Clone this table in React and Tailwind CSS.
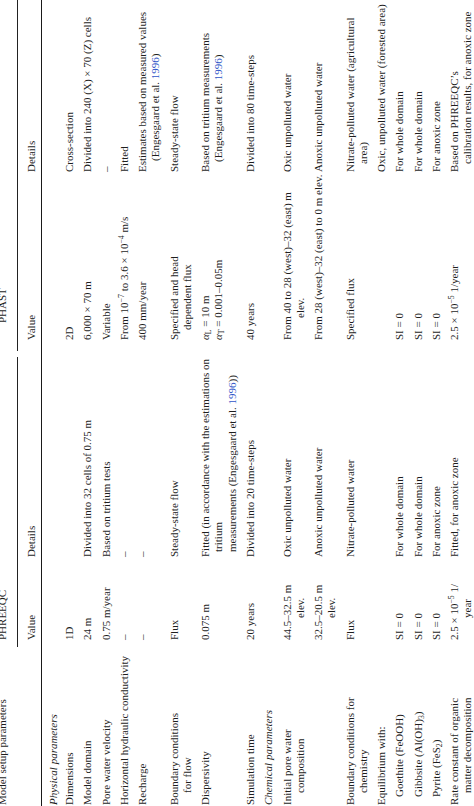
import React from 'react';

const Yr = () => <span className="text-[#2f55c8]">1996</span>;

const L = ({ children, className = '' }) => <span className={`block ${className}`}>{children}</span>;

function Row({ cells, className = 'py-[2.55px]' }) {
    return (
        <div className={`grid grid-cols-[165px_83px_217px_168px_1fr] ${className}`}>
            {cells.map((c, i) => (
                <div key={i} className="flex flex-col whitespace-nowrap">{c}</div>
            ))}
        </div>
    );
}

const Sup = ({ children }) => <sup className="text-[7.8px]">{children}</sup>;
const Sub = ({ children }) => <sub className="text-[7.8px]">{children}</sub>;

export default function App() {
    return (
        <div className="w-[474px] h-[806px] overflow-hidden bg-white">
            <div className="w-[806px] h-[474px] origin-top-left -rotate-90 translate-y-[806px] overflow-hidden font-['Liberation_Serif','Times_New_Roman',serif] text-[11px] leading-[13.2px] text-[#1e1e1e]">
                <div className="-mt-[3.6px] pl-[1px]">
                    {/* header */}
                    <Row className="py-0" cells={[
                        <L>Model setup parameters</L>,
                        <L>PHREEQC</L>,
                        null,
                        <L className="pl-[17px]">PHAST</L>,
                        null,
                    ]} />
                    <div className="flex h-[1px] mt-[7px]">
                        <div className="w-[158px]" />
                        <div className="w-[290px] bg-[#222]" />
                        <div className="w-[6px]" />
                        <div className="flex-1 bg-[#222]" />
                    </div>
                    <Row className="pt-[7px] pb-[3px]" cells={[
                        null,
                        <L>Value</L>,
                        <L>Details</L>,
                        <L>Value</L>,
                        <L>Details</L>,
                    ]} />
                    <div className="h-[1.5px] bg-[#1a1a1a] -ml-[1px]" />

                    <Row className="pt-[5px] pb-0" cells={[<L className="italic">Physical parameters</L>, null, null, null, null]} />
                    <Row cells={[<L>Dimensions</L>, <L>1D</L>, null, <L>2D</L>, <L>Cross-section</L>]} />
                    <Row cells={[
                        <L>Model domain</L>,
                        <L>24 m</L>,
                        <L>Divided into 32 cells of 0.75 m</L>,
                        <L>6,000 × 70 m</L>,
                        <L>Divided into 240 (X) × 70 (Z) cells</L>,
                    ]} />
                    <Row cells={[
                        <L>Pore water velocity</L>,
                        <L>0.75 m/year</L>,
                        <L>Based on tritium tests</L>,
                        <L>Variable</L>,
                        <L>–</L>,
                    ]} />
                    <Row cells={[
                        <L>Horizontal hydraulic conductivity</L>,
                        <L>–</L>,
                        <L>–</L>,
                        <L>From 10<Sup>−7</Sup> to 3.6 × 10<Sup>−4</Sup> m/s</L>,
                        <L>Fitted</L>,
                    ]} />
                    <Row cells={[
                        <L>Recharge</L>,
                        <L>–</L>,
                        <L>–</L>,
                        <L>400 mm/year</L>,
                        <>
                            <L>Estimates based on measured values</L>
                            <L className="pl-[11px]">(Engesgaard et al. <Yr />)</L>
                        </>,
                    ]} />
                    <Row cells={[
                        <>
                            <L>Boundary conditions</L>
                            <L className="pl-[12px]">for flow</L>
                        </>,
                        <L>Flux</L>,
                        <L>Steady-state flow</L>,
                        <>
                            <L>Specified and head</L>
                            <L className="pl-[10px]">dependent flux</L>
                        </>,
                        <L>Steady-state flow</L>,
                    ]} />
                    <Row cells={[
                        <L>Dispersivity</L>,
                        <L>0.075 m</L>,
                        <>
                            <L>Fitted (in accordance with the estimations on</L>
                            <L className="pl-[5px]">tritium</L>
                            <L className="pl-[5px]">measurements (Engesgaard et al. <Yr />))</L>
                        </>,
                        <>
                            <L><i>α</i><Sub>L</Sub> = 10 m</L>
                            <L><i>α</i><Sub>T</Sub> = 0.001–0.05m</L>
                        </>,
                        <>
                            <L>Based on tritium measurements</L>
                            <L className="pl-[10px]">(Engesgaard et al. <Yr />)</L>
                        </>,
                    ]} />
                    <Row cells={[
                        <L>Simulation time</L>,
                        <L>20 years</L>,
                        <L>Divided into 20 time-steps</L>,
                        <L>40 years</L>,
                        <L>Divided into 80 time-steps</L>,
                    ]} />
                    <Row cells={[<L className="italic">Chemical parameters</L>, null, null, null, null]} />
                    <Row cells={[
                        <>
                            <L>Initial pore water</L>
                            <L className="pl-[12px]">composition</L>
                        </>,
                        <>
                            <L>44.5–32.5 m</L>
                            <L className="pl-[22px]">elev.</L>
                        </>,
                        <L>Oxic unpolluted water</L>,
                        <>
                            <L>From 40 to 28 (west)–32 (east) m</L>
                            <L className="pl-[22px]">elev.</L>
                        </>,
                        <L>Oxic unpolluted water</L>,
                    ]} />
                    <Row cells={[
                        null,
                        <>
                            <L>32.5–20.5 m</L>
                            <L className="pl-[22px]">elev.</L>
                        </>,
                        <L>Anoxic unpolluted water</L>,
                        <L>From 28 (west)–32 (east) to 0 m elev.</L>,
                        <L>Anoxic unpolluted water</L>,
                    ]} />
                    <Row cells={[
                        <>
                            <L>Boundary conditions for</L>
                            <L className="pl-[12px]">chemistry</L>
                        </>,
                        <L>Flux</L>,
                        <L>Nitrate-polluted water</L>,
                        <L>Specified flux</L>,
                        <>
                            <L>Nitrate-polluted water (agricultural</L>
                            <L className="pl-[8px]">area)</L>
                        </>,
                    ]} />
                    <Row cells={[
                        <L>Equilibrium with:</L>,
                        null,
                        null,
                        null,
                        <L>Oxic, unpolluted water (forested area)</L>,
                    ]} />
                    <Row cells={[
                        <L className="pl-[8px]">Goethite (FeOOH)</L>,
                        <L>SI = 0</L>,
                        <L>For whole domain</L>,
                        <L>SI = 0</L>,
                        <L>For whole domain</L>,
                    ]} />
                    <Row cells={[
                        <L className="pl-[8px]">Gibbsite (Al(OH)<Sub>3</Sub>)</L>,
                        <L>SI = 0</L>,
                        <L>For whole domain</L>,
                        <L>SI = 0</L>,
                        <L>For whole domain</L>,
                    ]} />
                    <Row cells={[
                        <L className="pl-[8px]">Pyrite (FeS<Sub>2</Sub>)</L>,
                        <L>SI = 0</L>,
                        <L>For anoxic zone</L>,
                        <L>SI = 0</L>,
                        <L>For anoxic zone</L>,
                    ]} />
                    <Row cells={[
                        <>
                            <L>Rate constant of organic</L>
                            <L className="pl-[12px]">matter decomposition</L>
                        </>,
                        <>
                            <L>2.5 × 10<Sup>−5</Sup> 1/</L>
                            <L className="pl-[22px]">year</L>
                        </>,
                        <L>Fitted, for anoxic zone</L>,
                        <L>2.5 × 10<Sup>−5</Sup> 1/year</L>,
                        <>
                            <L>Based on PHREEQC’s</L>
                            <L className="pl-[8px]">calibration results, for anoxic zone</L>
                        </>,
                    ]} />
                </div>
            </div>
        </div>
    );
}
